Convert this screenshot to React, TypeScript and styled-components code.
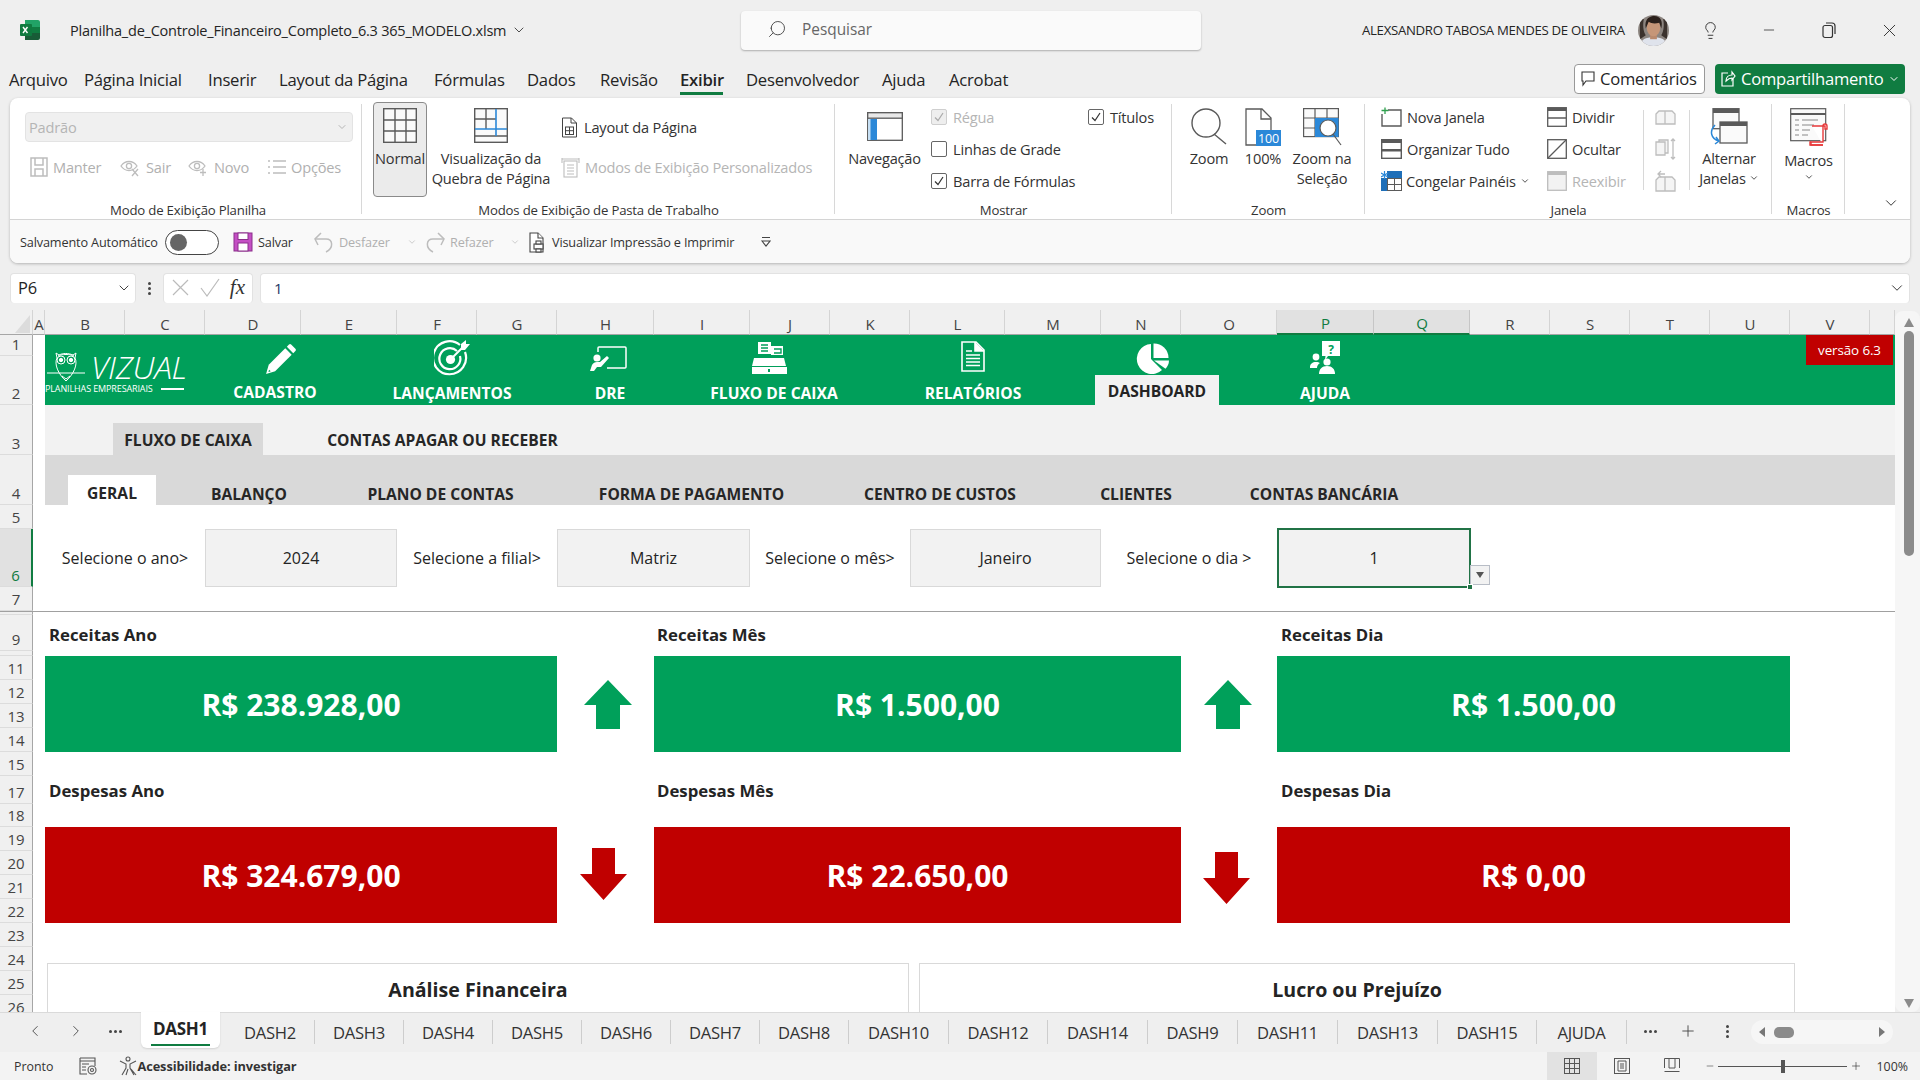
import styled, { createGlobalStyle } from "styled-components"
import { ChevronDown, ChevronLeft, ChevronRight, Lightbulb, Minus, Plus, Search, X } from "lucide-react"

const ui = `"Open Sans", "Noto Sans", sans-serif`

const GlobalStyle = createGlobalStyle`
  html, body { margin: 0; padding: 0; width: 1920px; height: 1080px; overflow: hidden; background: #efefef; }
  * { box-sizing: border-box; }
  body { font-family: ${ui}; color: #242424; }
  svg { display: block; flex: none; }
`

const Window = styled.div`
  width: 1920px;
  height: 1080px;
  display: flex;
  flex-direction: column;
  background: #efefef;
  overflow: hidden;
`

/* title bar */
const TitleBar = styled.div`
  height: 60px;
  flex: none;
  display: flex;
  align-items: center;
  padding-left: 19px;
`
const FileName = styled.div`
  margin-left: 29px;
  width: 454px;
  display: flex;
  align-items: center;
  gap: 5px;
  font-size: 14.5px;
  letter-spacing: -0.22px;
  white-space: nowrap;
`
const SearchBox = styled.div`
  margin-left: 217px;
  width: 460px;
  height: 39px;
  background: #fafafa;
  border-radius: 4px;
  box-shadow: 0 1px 2px rgba(0, 0, 0, 0.28);
  display: flex;
  align-items: center;
  padding-left: 26px;
  padding-bottom: 2px;
  gap: 15px;
  font-size: 15.4px;
  color: #666;
  svg { transform: scaleX(-1); }
`
const UserName = styled.div`
  margin-left: 161px;
  width: 276px;
  font-size: 13.2px;
  letter-spacing: -0.3px;
  white-space: nowrap;
`
const WinButton = styled.div<{ $w: number }>`
  width: ${(p) => p.$w}px;
  display: flex;
  justify-content: center;
  color: #333;
`

/* tab strip */
const TabStrip = styled.div`
  height: 38px;
  flex: none;
  display: flex;
  align-items: flex-start;
  padding-left: 9px;
`
const MenuTab = styled.div<{ $w: number; $active?: boolean }>`
  width: ${(p) => p.$w}px;
  height: 33px;
  padding-top: 9px;
  font-size: 16.7px;
  line-height: 22px;
  letter-spacing: -0.25px;
  white-space: nowrap;
  font-weight: ${(p) => (p.$active ? 600 : 400)};
  position: relative;
  &::after {
    content: "";
    display: ${(p) => (p.$active ? "block" : "none")};
    position: absolute;
    left: 0;
    top: 32px;
    width: 43px;
    height: 3px;
    background: #107c41;
  }
`
const CommentButton = styled.div`
  margin-left: 565px;
  margin-top: 4px;
  width: 131px;
  height: 30px;
  border: 1px solid #999;
  border-radius: 4px;
  background: #fff;
  display: flex;
  align-items: center;
  padding: 0 0 1px 6px;
  gap: 5px;
  font-size: 16.6px;
  letter-spacing: -0.25px;
`
const ShareButton = styled.div`
  margin-left: 10px;
  margin-top: 4px;
  width: 190px;
  height: 30px;
  border-radius: 4px;
  background: #107c41;
  color: #fff;
  display: flex;
  align-items: center;
  padding: 0 0 1px 5px;
  gap: 5px;
  font-size: 16.6px;
  letter-spacing: -0.25px;
  white-space: nowrap;
`

/* ribbon */
const Ribbon = styled.div`
  flex: none;
  margin: 0 10px;
  height: 165px;
  background: #fff;
  border-radius: 8px;
  box-shadow: 0 1px 3px rgba(0, 0, 0, 0.25);
  display: flex;
  flex-direction: column;
  overflow: hidden;
`
const RibbonTop = styled.div`
  height: 122px;
  flex: none;
  padding-top: 4px;
  display: flex;
  border-bottom: 1px solid #d4d4d4;
  font-size: 14.6px;
  letter-spacing: -0.2px;
  color: #333;
`
const Group = styled.div<{ $w: number }>`
  width: ${(p) => p.$w}px;
  height: 116px;
  flex: none;
  position: relative;
  display: flex;
  flex-direction: column;
  &::after {
    content: "";
    position: absolute;
    right: 0;
    top: 2px;
    bottom: 4px;
    width: 1px;
    background: #d8d8d8;
  }
`
const GroupBody = styled.div`
  height: 98px;
  flex: none;
  display: flex;
  align-items: flex-start;
`
const GroupLabel = styled.div<{ $pl?: number }>`
  height: 18px;
  line-height: 18px;
  padding: 1px 0 0 ${(p) => p.$pl ?? 0}px;
  text-align: center;
  font-size: 13.2px;
  letter-spacing: -0.2px;
  color: #333;
  white-space: nowrap;
`
const SheetViewBody = styled.div`
  height: 98px;
  padding: 10px 0 0 15px;
`
const ModeSelect = styled.div`
  width: 328px;
  height: 30px;
  background: #f0f0f0;
  border: 1px solid #e3e3e3;
  border-radius: 4px;
  padding: 0 4px 0 3px;
  display: flex;
  align-items: center;
  justify-content: space-between;
  color: #b5b5b5;
  font-size: 14.6px;
`
const MiniRow = styled.div`
  display: flex;
  margin: 13px 0 0 5px;
  height: 24px;
  align-items: center;
`
const MiniButton = styled.div<{ $w: number }>`
  width: ${(p) => p.$w}px;
  display: flex;
  align-items: center;
  gap: 5px;
  color: #b0b0b0;
  white-space: nowrap;
`
const LargeButton = styled.div<{ $w: number; $ml?: number; $pressed?: boolean }>`
  width: ${(p) => p.$w}px;
  margin-left: ${(p) => p.$ml ?? 0}px;
  height: 95px;
  flex: none;
  padding-top: ${(p) => (p.$pressed ? 5 : 6)}px;
  display: flex;
  flex-direction: column;
  align-items: center;
  text-align: center;
  line-height: 20px;
  white-space: nowrap;
  border-radius: 4px;
  background: ${(p) => (p.$pressed ? "#ebebeb" : "transparent")};
  border: ${(p) => (p.$pressed ? "1px solid #8a8a8a" : "none")};
`
const LargeIcon = styled.div<{ $pt?: number }>`
  height: 40px;
  flex: none;
  padding-top: ${(p) => p.$pt ?? 0}px;
  display: flex;
  align-items: flex-start;
  justify-content: center;
`
const StackColumn = styled.div<{ $w?: number; $ml?: number; $pt?: number; $gap?: number }>`
  width: ${(p) => (p.$w ? `${p.$w}px` : "auto")};
  margin-left: ${(p) => p.$ml ?? 0}px;
  padding-top: ${(p) => p.$pt ?? 0}px;
  display: flex;
  flex-direction: column;
  gap: ${(p) => p.$gap ?? 2}px;
  flex: none;
`
const StackRow = styled.div<{ $h?: number; $gap?: number; $off?: boolean; $pl?: number }>`
  height: ${(p) => p.$h ?? 30}px;
  display: flex;
  align-items: center;
  padding-left: ${(p) => p.$pl ?? 0}px;
  gap: ${(p) => p.$gap ?? 5}px;
  white-space: nowrap;
  color: ${(p) => (p.$off ? "#b5b5b5" : "inherit")};
`
const CheckBox = styled.div<{ $off?: boolean }>`
  width: 16px;
  height: 16px;
  flex: none;
  border: 1px solid ${(p) => (p.$off ? "#cfcfcf" : "#666")};
  background: ${(p) => (p.$off ? "#eee" : "#fff")};
  border-radius: 2px;
  display: flex;
  align-items: center;
  justify-content: center;
`
const VRule = styled.div`
  width: 1px;
  height: 80px;
  margin-top: 8px;
  background: #d8d8d8;
  flex: none;
`
const CollapseButton = styled.div`
  margin-left: 37px;
  align-self: flex-end;
  margin-bottom: 7px;
  color: #333;
`

/* quick access */
const QuickBar = styled.div`
  flex: 1;
  background: #f9f9f9;
  display: flex;
  align-items: center;
  padding-left: 10px;
  padding-top: 1px;
  font-size: 12.7px;
  letter-spacing: -0.15px;
  white-space: nowrap;
`
const QuickItem = styled.div<{ $w: number; $off?: boolean; $ml?: number }>`
  width: ${(p) => p.$w}px;
  margin-left: ${(p) => p.$ml ?? 0}px;
  flex: none;
  display: flex;
  align-items: center;
  gap: 5px;
  color: ${(p) => (p.$off ? "#b0b0b0" : "#333")};
`
const ToggleTrack = styled.div`
  width: 54px;
  height: 25px;
  flex: none;
  border: 1px solid #444;
  border-radius: 13px;
  background: #fff;
  padding: 3px;
  &::before {
    content: "";
    display: block;
    width: 17px;
    height: 17px;
    margin-left: 1px;
    border-radius: 50%;
    background: #666;
  }
`

/* formula bar */
const FormulaRow = styled.div`
  flex: none;
  margin: 10px 10px 0;
  height: 30px;
  display: flex;
  align-items: stretch;
  font-size: 16.4px;
`
const FormulaBox = styled.div<{ $w?: number; $ml?: number }>`
  width: ${(p) => (p.$w ? `${p.$w}px` : "auto")};
  flex: ${(p) => (p.$w ? "none" : "1")};
  margin-left: ${(p) => p.$ml ?? 0}px;
  background: #fff;
  border-radius: 4px;
  border: 1px solid #e2e2e2;
  border-bottom: none;
  display: flex;
  align-items: center;
  justify-content: space-between;
  padding: 0 3px 2px 7px;
`
const FormulaDots = styled.div`
  width: 27px;
  display: flex;
  flex-direction: column;
  align-items: center;
  justify-content: center;
  gap: 2px;
  i { width: 3px; height: 3px; background: #444; border-radius: 50%; }
`
const FxMark = styled.span`
  font-family: "Liberation Serif", serif;
  font-style: italic;
  font-size: 21px;
  color: #333;
  margin-right: 4px;
`
const ValueText = styled.span`
  color: #1f3864;
  margin-left: 6px;
  font-size: 15px;
`

/* sheet */
const SheetArea = styled.div`
  flex: none;
  margin-top: 7px;
  height: 702px;
  display: flex;
`
const columnWidths = "33px 12px 80px 80px 96px 96px 80px 80px 97px 96px 80px 80px 95px 96px 80px 96px 97px 96px 80px 80px 80px 80px 80px 25px"
const rowHeights = "25px 21px 49px 50px 50px 24px 58px 24px 4px 36px 5px 24px 24px 24px 24px 24px 28px 23px 24px 24px 24px 24px 24px 24px 24px 24px"
const SheetGrid = styled.div`
  width: 1895px;
  flex: none;
  overflow: hidden;
  background: #fff;
  display: grid;
  grid-template-columns: ${columnWidths};
  grid-template-rows: ${rowHeights};
`
const Corner = styled.div`
  grid-column: 1;
  grid-row: 1;
  background: #f0f0f0;
  border-right: 1px solid #d4d4d4;
  border-bottom: 1px solid #a6a6a6;
  padding: 5px 0 0 15px;
`
const ColHead = styled.div<{ $col: number; $on?: boolean }>`
  grid-column: ${(p) => p.$col};
  grid-row: 1;
  background: ${(p) => (p.$on ? "#e1e1e1" : "#f0f0f0")};
  border-right: 1px solid ${(p) => (p.$on ? "#c6c6c6" : "#d4d4d4")};
  border-bottom: ${(p) => (p.$on ? "2px solid #107c41" : "1px solid #a6a6a6")};
  color: ${(p) => (p.$on ? "#107c41" : "#444")};
  display: flex;
  justify-content: center;
  align-items: center;
  font-size: 15px;
  padding: 3px 0 0 1px;
`
const RowHead = styled.div<{ $row: number; $on?: boolean }>`
  grid-column: 1;
  grid-row: ${(p) => p.$row};
  background: ${(p) => (p.$on ? "#e1e1e1" : "#f0f0f0")};
  border-right: ${(p) => (p.$on ? "2px solid #107c41" : "1px solid #a6a6a6")};
  border-bottom: 1px solid #dcdcdc;
  color: ${(p) => (p.$on ? "#107c41" : "#444")};
  overflow: hidden;
  display: flex;
  justify-content: center;
  align-items: flex-end;
  font-size: 15px;
  line-height: 22px;
`
const Band = styled.div<{ $row: string; $bg: string }>`
  grid-column: 3 / -1;
  grid-row: ${(p) => p.$row};
  background: ${(p) => p.$bg};
  display: flex;
  align-items: flex-end;
  min-height: 0;
`
const Logo = styled.div`
  width: 150px;
  height: 70px;
  flex: none;
  display: flex;
  flex-direction: column;
  padding-top: 16px;
  color: #fff;
`
const LogoTop = styled.div`
  display: flex;
  align-items: center;
  gap: 6px;
  padding-left: 2px;
  height: 32px;
`
const LogoName = styled.span`
  font-weight: 300;
  font-style: italic;
  font-size: 32px;
  line-height: 32px;
  letter-spacing: -0.3px;
`
const LogoSub = styled.div`
  display: flex;
  align-items: center;
  gap: 8px;
  font-size: 9px;
  line-height: 12px;
  white-space: nowrap;
  letter-spacing: -0.12px;
  &::after {
    content: "";
    width: 23px;
    height: 2px;
    background: #fff;
  }
`
const NavItem = styled.div<{ $w: number; $ml?: number; $lift?: number }>`
  width: ${(p) => p.$w}px;
  margin-left: ${(p) => p.$ml ?? 0}px;
  height: 70px;
  flex: none;
  padding-bottom: ${(p) => p.$lift ?? 1}px;
  display: flex;
  flex-direction: column;
  align-items: center;
  color: #fff;
  font-weight: 700;
  font-size: 15.6px;
  line-height: 22px;
  white-space: nowrap;
`
const NavIcon = styled.div<{ $pt?: number; $dx?: number }>`
  height: 40px;
  flex: 1;
  padding-top: ${(p) => p.$pt ?? 6}px;
  display: flex;
  justify-content: center;
  transform: translateX(${(p) => p.$dx ?? 0}px);
`
const NavLabelActive = styled.div`
  align-self: stretch;
  height: 30px;
  background: #f2f2f2;
  color: #242424;
  text-align: center;
  font-weight: 700;
  font-size: 15.6px;
  line-height: 33px;
`
const VersionTag = styled.div`
  margin-left: auto;
  margin-right: 2px;
  align-self: flex-start;
  width: 87px;
  height: 30px;
  background: #c00000;
  color: #fff;
  font-size: 13.4px;
  display: flex;
  align-items: center;
  justify-content: center;
  letter-spacing: -0.1px;
`
const SubTab = styled.div<{ $w: number; $ml?: number; $h: number; $bg?: string; $pt?: number }>`
  width: ${(p) => p.$w}px;
  margin-left: ${(p) => p.$ml ?? 0}px;
  height: ${(p) => p.$h}px;
  flex: none;
  background: ${(p) => p.$bg ?? "transparent"};
  display: flex;
  align-items: center;
  justify-content: center;
  padding-top: ${(p) => p.$pt ?? 0}px;
  font-weight: 700;
  font-size: 15.6px;
  color: #262626;
  white-space: nowrap;
`
const SelectLabel = styled.div<{ $col: string }>`
  grid-column: ${(p) => p.$col};
  grid-row: 7;
  display: flex;
  align-items: center;
  justify-content: center;
  font-size: 16px;
  white-space: nowrap;
`
const SelectCell = styled.div<{ $col: string; $on?: boolean }>`
  grid-column: ${(p) => p.$col};
  grid-row: 7;
  margin: ${(p) => (p.$on ? "-1px -1px -1px 0" : "0")};
  background: #f2f2f2;
  border: ${(p) => (p.$on ? "2px solid #217346" : "1px solid #d9d9d9")};
  display: flex;
  align-items: center;
  justify-content: center;
  font-size: 16px;
  position: relative;
  z-index: 2;
  &::after {
    content: "";
    display: ${(p) => (p.$on ? "block" : "none")};
    position: absolute;
    right: -4px;
    bottom: -4px;
    background: #217346;
    border: 1px solid #fff;
    box-sizing: content-box;
    width: 4px;
    height: 4px;
  }
`
const DropButton = styled.div`
  position: absolute;
  left: 100%;
  margin-left: 1px;
  top: 35px;
  width: 20px;
  height: 20px;
  background: #f2f2f2;
  border: 1px solid #b8bdc6;
  display: flex;
  align-items: center;
  justify-content: center;
`
const FreezeLine = styled.div`
  grid-column: 1 / -1;
  grid-row: 9;
  border-top: 1px solid #a0a0a0;
  z-index: 3;
`
const CardTitle = styled.div<{ $col: string; $row: string; $pl: number; $pt?: number }>`
  grid-column: ${(p) => p.$col};
  grid-row: ${(p) => p.$row};
  padding-left: ${(p) => p.$pl}px;
  padding-top: ${(p) => p.$pt ?? 8}px;
  font-size: 16.8px;
  font-weight: 700;
  line-height: 24px;
`
const ValueCard = styled.div<{ $col: string; $row: string; $bg: string }>`
  grid-column: ${(p) => p.$col};
  grid-row: ${(p) => p.$row};
  background: ${(p) => p.$bg};
  color: #fff;
  display: flex;
  align-items: center;
  justify-content: center;
  font-size: 30px;
  font-weight: 700;
`
const ArrowCell = styled.div<{ $col: number; $row: string; $dx?: number; $dy?: number }>`
  grid-column: ${(p) => p.$col};
  grid-row: ${(p) => p.$row};
  display: flex;
  align-items: center;
  justify-content: center;
  transform: translate(${(p) => p.$dx ?? 0}px, ${(p) => p.$dy ?? 0}px);
`
const ChartPanel = styled.div<{ $col: string; $ml: number; $mr: number }>`
  grid-column: ${(p) => p.$col};
  grid-row: 24 / 30;
  margin: 16px ${(p) => p.$mr}px 0 ${(p) => p.$ml}px;
  height: 200px;
  border: 1px solid #d9d9d9;
  text-align: center;
  font-size: 19.6px;
  font-weight: 700;
  padding-top: 12px;
  line-height: 28px;
`
const VScroll = styled.div`
  width: 25px;
  flex: none;
  margin-top: 1px;
  background: #f6f6f6;
  border-radius: 8px;
  display: flex;
  flex-direction: column;
  align-items: center;
  padding: 7px 0 4px 2px;
`
const VThumb = styled.div`
  width: 10px;
  height: 225px;
  margin-top: 4px;
  border-radius: 5px;
  background: #8b8b8b;
`
const ScrollArrow = styled.div<{ $down?: boolean }>`
  width: 0;
  height: 0;
  border-left: 5px solid transparent;
  border-right: 5px solid transparent;
  border-bottom: ${(p) => (p.$down ? "none" : "9px solid #8b8b8b")};
  border-top: ${(p) => (p.$down ? "9px solid #8b8b8b" : "none")};
  margin-top: ${(p) => (p.$down ? "auto" : "0")};
`

/* sheet tabs */
const SheetTabs = styled.div`
  flex: none;
  height: 40px;
  border-top: 1px solid #dadada;
  display: flex;
  align-items: flex-start;
  font-size: 16.6px;
  letter-spacing: -0.3px;
  color: #333;
`
const TabNav = styled.div<{ $w: number; $ml?: number }>`
  width: ${(p) => p.$w}px;
  margin-left: ${(p) => p.$ml ?? 0}px;
  height: 39px;
  flex: none;
  display: flex;
  align-items: center;
  justify-content: center;
  color: #444;
  padding-bottom: 3px;
`
const DotRow = styled.div<{ $column?: boolean }>`
  display: flex;
  flex-direction: ${(p) => (p.$column ? "column" : "row")};
  gap: 2px;
  i { width: 3px; height: 3px; background: #444; border-radius: 50%; }
`
const ActiveSheet = styled.div`
  margin-left: 13px;
  margin-top: -1px;
  width: 79px;
  height: 36px;
  flex: none;
  background: #fff;
  border-radius: 0 0 6px 6px;
  box-shadow: 0 1px 2px rgba(0, 0, 0, 0.12);
  padding: 5px 0 0;
  text-align: center;
  font-weight: 700;
  font-size: 17px;
  color: #242424;
  line-height: 23px;
  position: relative;
  &::after {
    content: "";
    position: absolute;
    left: 10px;
    right: 10px;
    bottom: 2px;
    height: 2px;
    background: #107c41;
  }
`
const SheetTab = styled.div<{ $w: number; $ml?: number }>`
  width: ${(p) => p.$w}px;
  margin-left: ${(p) => p.$ml ?? 0}px;
  margin-top: 7px;
  height: 24px;
  flex: none;
  text-align: center;
  line-height: 24px;
  border-right: 1px solid #cdcdcd;
  padding-top: 1px;
`
const HScroll = styled.div`
  margin-top: 7px;
  width: 142px;
  height: 24px;
  border-radius: 12px;
  background: #f6f6f6;
  display: flex;
  align-items: center;
  padding: 0 8px 0 8px;
  gap: 9px;
`
const HThumb = styled.div`
  width: 20px;
  height: 11px;
  border-radius: 5px;
  background: #8b8b8b;
`
const SideArrow = styled.div<{ $right?: boolean }>`
  width: 0;
  height: 0;
  border-top: 5px solid transparent;
  border-bottom: 5px solid transparent;
  border-left: ${(p) => (p.$right ? "6px solid #777" : "none")};
  border-right: ${(p) => (p.$right ? "none" : "6px solid #777")};
  margin-left: ${(p) => (p.$right ? "auto" : "0")};
`

/* status bar */
const StatusBar = styled.div`
  flex: 1;
  background: #f3f3f3;
  display: flex;
  align-items: center;
  padding: 0 12px 0 14px;
  font-size: 12.4px;
  color: #333;
  white-space: nowrap;
`
const StatusGap = styled.span<{ $w: number }>`
  width: ${(p) => p.$w}px;
  flex: none;
`
const StatusStrong = styled.span`
  font-weight: 700;
  font-size: 12.8px;
  letter-spacing: -0.1px;
`
const ViewButton = styled.div<{ $on?: boolean; $first?: boolean; $w: number }>`
  width: ${(p) => p.$w}px;
  margin-left: ${(p) => (p.$first ? "auto" : "0")};
  height: 28px;
  display: flex;
  align-items: center;
  justify-content: center;
  background: ${(p) => (p.$on ? "#e2e2e2" : "transparent")};
`
const ZoomTrack = styled.div`
  width: 129px;
  height: 1px;
  background: #555;
  margin: 0 3px;
  position: relative;
  &::after {
    content: "";
    position: absolute;
    left: 63px;
    top: -6px;
    width: 4px;
    height: 13px;
    background: #555;
  }
`
const ZoomValue = styled.span`
  margin-left: 15px;
`

const g = "#5a5a5a"
const off = "#bdbdbd"
const blue = "#2b88d8"

const ExcelIcon = () => (
  <svg width="22" height="22" viewBox="0 0 22 22">
    <path d="M6 1h13a2 2 0 0 1 2 2v5H6z" fill="#21a366" />
    <rect x="6" y="8" width="15" height="6" fill="#107c41" />
    <path d="M6 14h15v5a2 2 0 0 1-2 2H6z" fill="#185c37" />
    <rect x="1" y="5" width="12" height="12" rx="1" fill="#0f7a3f" />
    <path d="M4 8l4.5 6M8.5 8L4 14" stroke="#fff" strokeWidth="1.4" />
  </svg>
)
const Avatar = () => (
  <svg width="31" height="31" viewBox="0 0 32 32">
    <clipPath id="av"><circle cx="16" cy="16" r="16" /></clipPath>
    <g clipPath="url(#av)">
      <rect width="32" height="32" fill="#8c8580" />
      <path d="M2 32c1-7 6-9 14-9s13 2 14 9z" fill="#dfe3ec" />
      <rect x="12.5" y="18" width="7" height="7" fill="#b98a6e" />
      <ellipse cx="16" cy="13" rx="7" ry="9" fill="#c69678" />
      <path d="M8 14C6 3 13 1 17 1c6 0 9 5 7 13l-2-6c-4 1-8 1-11-1z" fill="#2c211c" />
      <path d="M6 4C5 9 5 16 8 21l-6 4V2zM26 4c1 5 1 12-2 17l6 4V2z" fill="#3b322d" />
    </g>
  </svg>
)
const RestoreIcon = () => (
  <svg width="14" height="18" viewBox="0 0 14 18" fill="none" stroke="#333" strokeWidth="1.2">
    <rect x="1" y="4.5" width="9.5" height="12" rx="2" />
    <path d="M4 2h6a3 3 0 0 1 3 3v8" />
  </svg>
)
const CommentIcon = ({ c = "#333" }: { c?: string }) => (
  <svg width="14" height="18" viewBox="0 0 14 18" fill="none" stroke={c} strokeWidth="1.1">
    <path d="M1 2h12v9H5l-3 4v-4H1z" />
  </svg>
)
const ShareIcon = () => (
  <svg width="16" height="18" viewBox="0 0 16 18" fill="none" stroke="#fff" strokeWidth="1.2">
    <path d="M8 3H2v13h11V9" />
    <path d="M6 11c0-4 3-6 6-6V2l3 4-3 4V8c-2 0-4 1-6 3z" />
  </svg>
)
const SheetGridIcon = () => (
  <svg width="34" height="35" viewBox="0 0 34 35" fill="#fafafa" stroke={g} strokeWidth="1.4">
    <rect x=".7" y=".7" width="32.6" height="33.6" />
    <path d="M12 1v33M23 1v33M1 12h32M1 23h32" fill="none" />
  </svg>
)
const BreakIcon = () => (
  <svg width="34" height="35" viewBox="0 0 34 35" fill="#fafafa" stroke={g} strokeWidth="1.4">
    <rect x=".7" y=".7" width="32.6" height="33.6" />
    <path d="M12 1v20M1 11h21M1 28h32" fill="none" />
    <path d="M22 1v27M1 21h32" fill="none" stroke={blue} strokeWidth="1.6" />
  </svg>
)
const PageLayoutIcon = () => (
  <svg width="17" height="21" viewBox="0 0 17 21" fill="#fff" stroke="#444" strokeWidth="1">
    <path d="M1.5 1h9l5 5v14h-14z" />
    <path d="M10 1v5h5.5" fill="none" />
    <rect x="4.5" y="10" width="8" height="7.5" />
    <path d="M8.5 10v7.5M4.5 13.7h8" />
  </svg>
)
const CustomViewIcon = () => (
  <svg width="19" height="21" viewBox="0 0 19 21" fill="none" stroke={off} strokeWidth="1.1">
    <rect x="3" y="4" width="13" height="16" />
    <path d="M1 1v5M18 1v5M1 2h17M6 8h7M6 11h7M6 14h7M6 17h7" />
  </svg>
)
const KeepIcon = () => (
  <svg width="18" height="20" viewBox="0 0 18 20" fill="none" stroke={off} strokeWidth="1.5">
    <path d="M1 1h16v18H1zM5 1v7h8V1M5 19v-7h8v7" />
  </svg>
)
const EyeIcon = ({ mark }: { mark: "x" | "+" }) => (
  <svg width="21" height="19" viewBox="0 0 21 19" fill="none" stroke={off} strokeWidth="1.3">
    <path d="M1 8c4-6 12-6 16 0-4 6-12 6-16 0z" />
    <circle cx="9" cy="8" r="2.6" />
    {mark === "x" ? <path d="M12 11l6 7M18 11l-6 7" /> : <path d="M15 11v7M12 14.5h6" />}
  </svg>
)
const ListIcon = () => (
  <svg width="19" height="16" viewBox="0 0 19 16" fill="none" stroke={off} strokeWidth="1.4">
    <path d="M6 2h13M6 8h13M6 14h13M1 2h2M1 8h2M1 14h2" />
  </svg>
)
const NavPaneIcon = () => (
  <svg width="36" height="29" viewBox="0 0 36 29" fill="#fff" stroke={g} strokeWidth="1.3">
    <rect x=".7" y=".7" width="34.6" height="27.6" />
    <rect x=".7" y=".7" width="34.6" height="5.5" fill="#e8e8e8" />
    <rect x="1" y="7" width="9" height="21" fill={blue} stroke="none" />
    <rect x="1" y="7" width="2.5" height="21" fill="#c7e0f4" stroke="none" />
  </svg>
)
const Check = ({ c = "#333" }: { c?: string }) => (
  <svg width="12" height="12" viewBox="0 0 12 12" fill="none" stroke={c} strokeWidth="1.2">
    <path d="M2 6.5l3 3 5-7.5" />
  </svg>
)
const ZoomIcon = () => (
  <svg width="37" height="38" viewBox="0 0 37 38" fill="#fff" stroke={g} strokeWidth="1.4">
    <circle cx="15" cy="15" r="14" />
    <path d="M24 27l12 10" transform="translate(-1 -1)" />
  </svg>
)
const FullZoomIcon = () => (
  <svg width="36" height="38" viewBox="0 0 36 38">
    <path d="M1 1h16l9 9v27H1z" fill="#fff" stroke={g} strokeWidth="1.3" />
    <path d="M16 1v10h10" fill="none" stroke={g} strokeWidth="1.3" />
    <rect x="11" y="22" width="25" height="16" fill="#2b88d8" />
    <text x="23.5" y="35" fontSize="12.5" fill="#fff" textAnchor="middle" fontFamily="Open Sans, sans-serif">100</text>
  </svg>
)
const ZoomSelIcon = () => (
  <svg width="39" height="38" viewBox="0 0 39 38" fill="none" stroke={g} strokeWidth="1.2">
    <rect x=".6" y=".6" width="34.8" height="28" fill="#fafafa" />
    <path d="M12 1v28M24 1v28M1 10h34M1 20h34" />
    <rect x="12" y="10" width="23.5" height="19" fill="#2b88d8" stroke="none" />
    <circle cx="25" cy="20" r="8" fill="#fff" />
    <path d="M30 26l8 11" />
  </svg>
)
const NewWindowIcon = () => (
  <svg width="21" height="20" viewBox="0 0 21 20" fill="#fff" stroke={g} strokeWidth="1.4">
    <path d="M7 3h13v16H1V7" />
    <path d="M4 0.5v6.5M0.5 3.5h7" stroke="#2fa04e" strokeWidth="1.3" fill="none" />
  </svg>
)
const ArrangeIcon = () => (
  <svg width="21" height="20" viewBox="0 0 21 20" fill="#fff" stroke={g} strokeWidth="1.4">
    <rect x=".7" y=".7" width="19.6" height="18.6" />
    <rect x="1" y="1" width="19" height="3" fill={g} stroke="none" />
    <rect x="1" y="10" width="19" height="2.5" fill={g} stroke="none" />
  </svg>
)
const FreezeIcon = () => (
  <svg width="21" height="20" viewBox="0 0 21 20" fill="none">
    <rect x="6" y="0" width="15" height="7" fill="#1f6fb8" />
    <rect x="0" y="7" width="6" height="13" fill="#1f6fb8" />
    <rect x="6.5" y="7.5" width="14" height="12" fill="#fff" stroke={g} />
    <path d="M13.5 7v13M6 13.5h15" stroke={g} />
    <path d="M3.5 0v8M0 2l7 4M7 2L0 6" stroke="#2b88d8" strokeWidth="1.2" />
  </svg>
)
const SplitIcon = () => (
  <svg width="20" height="20" viewBox="0 0 20 20" fill="#fff" stroke={g} strokeWidth="1.3">
    <rect x=".7" y=".7" width="18.6" height="18.6" />
    <rect x="1" y="1" width="18" height="3" fill={g} stroke="none" />
    <path d="M1 11h18" />
  </svg>
)
const HideIcon = () => (
  <svg width="20" height="20" viewBox="0 0 20 20" fill="#fff" stroke={g} strokeWidth="1.3">
    <rect x=".7" y=".7" width="18.6" height="18.6" />
    <path d="M1 19L19 1" />
  </svg>
)
const UnhideIcon = () => (
  <svg width="20" height="20" viewBox="0 0 20 20" fill="#f2f2f2" stroke={off} strokeWidth="1.3">
    <rect x=".7" y=".7" width="18.6" height="18.6" />
    <rect x="1" y="1" width="18" height="3" fill={off} stroke="none" />
  </svg>
)
const BookIcon = () => (
  <svg width="21" height="15" viewBox="0 0 21 15" fill="#f5f5f5" stroke={off} strokeWidth="1.3">
    <path d="M1 4l3-3h6v13H1zM10 1h7l3 3v10H10z" />
  </svg>
)
const SyncScrollIcon = () => (
  <svg width="21" height="22" viewBox="0 0 21 22" fill="#f5f5f5" stroke={off} strokeWidth="1.3">
    <path d="M1 4h9v13H1zM4 4V2h9v13h-3" />
    <path d="M18 1v20M16 3l2-2 2 2M16 19l2 2 2-2" fill="none" />
  </svg>
)
const ResetIcon = () => (
  <svg width="21" height="22" viewBox="0 0 21 22" fill="#f5f5f5" stroke={off} strokeWidth="1.3">
    <path d="M1 10l3-3h6v14H1zM10 7h7l3 3v11H10z" />
    <path d="M10 4H4M6 1L3 4l3 3" fill="none" />
  </svg>
)
const SwitchIcon = () => (
  <svg width="38" height="37" viewBox="0 0 38 37" fill="#fafafa" stroke={g} strokeWidth="1.3">
    <rect x="3" y=".7" width="26" height="20" />
    <rect x="3" y="1" width="26" height="4" fill={g} stroke="none" />
    <rect x="10" y="14" width="27" height="21" />
    <rect x="10" y="14" width="27" height="4" fill={g} stroke="none" />
    <path d="M5 17c-6 6-4 14 4 16M6 29l3 4-4 3" fill="none" stroke={blue} strokeWidth="1.5" />
  </svg>
)
const MacroIcon = () => (
  <svg width="38" height="38" viewBox="0 0 38 38" fill="none" stroke={g} strokeWidth="1.2">
    <rect x=".7" y=".7" width="35" height="32" fill="#fafafa" />
    <path d="M1 6h35" strokeWidth="1.8" />
    <path d="M5 12h4M12 12h16M5 17h4M12 17h12M5 22h4M12 22h8M5 27h4M12 27h6" strokeWidth="1.2" stroke="#888" />
    <path d="M22 18h13v3h2v-3a2 2 0 0 0-4 0v16H21v3h12" stroke="#e8393a" strokeWidth="1.4" fill="#fff" />
    <path d="M21 34h-1v3h13" stroke="#e8393a" strokeWidth="1.4" />
  </svg>
)
const SaveIcon = () => (
  <svg width="20" height="20" viewBox="0 0 20 20">
    <rect x="1" y="1" width="18" height="18" fill="#c44fc4" stroke="#8b2f8b" />
    <rect x="5" y="1" width="10" height="6.5" fill="#fff" stroke="#8b2f8b" />
    <rect x="5" y="11" width="10" height="8" fill="#fff" stroke="#8b2f8b" />
  </svg>
)
const UndoIcon = ({ flip }: { flip?: boolean }) => (
  <svg width="20" height="21" viewBox="0 0 20 21" fill="none" stroke={off} strokeWidth="1.5" style={flip ? { transform: "scaleX(-1)" } : undefined}>
    <path d="M1 7h11c7 0 8 9 0 13" />
    <path d="M7 1L1 7l3 6" />
  </svg>
)
const PrintIcon = () => (
  <svg width="18" height="21" viewBox="0 0 18 21" fill="#fff" stroke="#444" strokeWidth="1.1">
    <path d="M1 1h8l5 5v14H1z" />
    <path d="M9 1v5h5" />
    <rect x="5" y="12" width="9" height="5" />
    <rect x="7" y="9" width="5" height="3" />
    <rect x="7" y="17" width="5" height="3" />
  </svg>
)
const CustomizeIcon = () => (
  <svg width="10" height="12" viewBox="0 0 10 12" fill="none" stroke="#444" strokeWidth="1.1">
    <path d="M1 1.5h8M1 5l4 5 4-5z" />
  </svg>
)
const CellXIcon = () => (
  <svg width="19" height="19" viewBox="0 0 19 19" fill="none" stroke="#bbb" strokeWidth="1.2">
    <path d="M2 2l15 15M17 2L2 17" />
  </svg>
)
const CellCheckIcon = () => (
  <svg width="20" height="19" viewBox="0 0 20 19" fill="none" stroke="#bbb" strokeWidth="1.2">
    <path d="M1 10l6 8L19 1" />
  </svg>
)
const OwlLogo = () => (
  <svg width="38" height="32" viewBox="0 0 38 32" fill="none" stroke="#fff" strokeWidth="1">
    <path d="M9 2l3 2c4-2 9-2 14 0l3-2-1 5c3 6-1 16-9 23C11 23 7 13 10 7z" />
    <circle cx="14" cy="9" r="4" />
    <circle cx="14" cy="9" r="1.7" fill="#fff" />
    <circle cx="24" cy="9" r="4" />
    <circle cx="24" cy="9" r="1.7" fill="#fff" />
    <path d="M11 5c3-2 13-2 16 0M0 22h38M15 25l4 3 4-3" />
  </svg>
)
const PencilIcon = () => (
  <svg width="32" height="30" viewBox="0 0 30 28" fill="#fff">
    <path d="M1 28l2.5-8.5L19 4l6 6L9.5 25.5z" />
    <path d="M20.5 2.5l2-2a1.5 1.5 0 0 1 2 0l4 4a1.5 1.5 0 0 1 0 2l-2 2z" />
    <path d="M3.8 24l1.6 1.6-2.2.7z" fill="#009f5a" />
  </svg>
)
const TargetIcon = () => (
  <svg width="36" height="36" viewBox="0 0 36 36" fill="none" stroke="#fff" strokeWidth="2.2">
    <path d="M26 5a16.5 16.5 0 1 0 5 7" />
    <path d="M23 11a10.5 10.5 0 1 0 3 5" />
    <circle cx="16.5" cy="19.5" r="4.6" fill="#fff" stroke="none" />
    <path d="M17 19L29 7" strokeWidth="2" />
    <path d="M27 4l5-4 0 4 4 0-5 6h-4z" fill="#fff" stroke="none" />
  </svg>
)
const BoardIcon = () => (
  <svg width="38" height="26" viewBox="0 0 38 26" fill="none">
    <path d="M9 6V2a1 1 0 0 1 1-1h26a1 1 0 0 1 1 1v19a1 1 0 0 1-1 1H18" stroke="#fff" strokeWidth="1.5" />
    <circle cx="8" cy="12" r="3.6" fill="#fff" />
    <path d="M1 25l2-6c1-2 3-3 5-3h3l7-6 2 2-8 9H8l-3 4z" fill="#fff" />
  </svg>
)
const RegisterIcon = () => (
  <svg width="36" height="33" viewBox="0 0 36 33" fill="#fff">
    <path d="M7 0h13v12H7zM3 16h30l2 8H1z" />
    <path d="M20 4h12v9H20z" />
    <rect x="1" y="25" width="35" height="7" />
    <path d="M10 3h7M10 6h7M10 9h7M23 7h7v4h-7" stroke="#009f5a" strokeWidth="1.4" fill="none" />
    <path d="M18 27v3" stroke="#009f5a" strokeWidth="2" />
  </svg>
)
const ReportIcon = () => (
  <svg width="24" height="31" viewBox="0 0 24 31" fill="none" stroke="#fff" strokeWidth="1.6">
    <path d="M1 1h14l8 8v21H1z" />
    <path d="M14 1v9h9" fill="#fff" />
    <path d="M5 10h6M5 14h14M5 17.5h14M5 21h14M5 24.5h14" />
  </svg>
)
const PieIcon = () => (
  <svg width="33" height="31" viewBox="0 0 33 31" fill="#fff">
    <path d="M15 1a15 15 0 1 0 11 26l-11-11z" />
    <path d="M17.5.5a14.5 14.5 0 0 1 15 14.500h-15z" />
    <path d="M18 17.500h15c0 3.500-1.500 6-3.500 8.300z" />
  </svg>
)
const HelpIcon = () => (
  <svg width="30" height="33" viewBox="0 0 30 33" fill="#fff">
    <path d="M12 0h18v15H18l-3 4 .5-4H12z" />
    <text x="21" y="12.500" fontSize="12" fontWeight="700" fill="#009f5a" textAnchor="middle" fontFamily="Open Sans, sans-serif">?</text>
    <circle cx="6" cy="16" r="3.400" />
    <path d="M0 26c0-3 2.500-5 6-5 2 0 3 .5 4 1-2 1-3 3-3 5H0z" />
    <circle cx="17" cy="21" r="3.600" />
    <path d="M9 33c0-5 3-8 8-8s8 3 8 8z" />
  </svg>
)
const ArrowUp = () => (
  <svg width="48" height="49" viewBox="0 0 48 49" fill="#00a05a">
    <path d="M24 0l24 25H36v24H12V25H0z" />
  </svg>
)
const ArrowDown = () => (
  <svg width="47" height="52" viewBox="0 0 47 52" fill="#c00000">
    <path d="M23.500 52L0 26h12V0h23v26h12z" />
  </svg>
)
const StatusSheetIcon = () => (
  <svg width="18" height="18" viewBox="0 0 18 18" fill="none" stroke="#555" strokeWidth="1.1">
    <path d="M1 1h15v8M1 1v16h7M1 4h15" />
    <path d="M3 7h7M3 10h4M3 13h4" />
    <circle cx="13" cy="13" r="4" />
    <circle cx="13" cy="13" r="1.500" />
  </svg>
)
const AccessIcon = () => (
  <svg width="18" height="20" viewBox="0 0 18 20" fill="none" stroke="#555" strokeWidth="1.1">
    <circle cx="9" cy="3" r="2" />
    <path d="M1 5l6 3v4l-4 7M17 5l-6 3v4l4 7M9 13l-2 6M12 13l5 6" />
  </svg>
)
const StatusGridIcon = () => (
  <svg width="16" height="16" viewBox="0 0 16 16" fill="none" stroke="#555" strokeWidth="1">
    <rect x=".5" y=".5" width="15" height="15" />
    <path d="M5.500 1v14M10.500 1v14M1 5.500h14M1 10.500h14" />
  </svg>
)
const StatusPageIcon = () => (
  <svg width="16" height="16" viewBox="0 0 16 16" fill="none" stroke="#555" strokeWidth="1">
    <rect x=".5" y=".5" width="15" height="15" />
    <path d="M4 3h8v10H4zM6 6h4M6 8h4M6 10h4" />
  </svg>
)
const StatusBreakIcon = () => (
  <svg width="16" height="16" viewBox="0 0 16 16" fill="none" stroke="#555" strokeWidth="1">
    <path d="M.5 10V.5h15V10M.5 13.500h15M5 1v9h6V1" />
  </svg>
)

const menus: Array<[string, number]> = [
  ["Arquivo", 75], ["Página Inicial", 124], ["Inserir", 71], ["Layout da Página", 155], ["Fórmulas", 93], ["Dados", 73], ["Revisão", 80],
]
const columns = "A B C D E F G H I J K L M N O P Q R S T U V".split(" ")
const rowLabels: Array<[string, number]> = [
  ["1", 2], ["2", 3], ["3", 4], ["4", 5], ["5", 6], ["6", 7], ["7", 8], ["8", 9], ["9", 10], ["10", 11], ["11", 12], ["12", 13], ["13", 14],
  ["14", 15], ["15", 16], ["17", 17], ["18", 18], ["19", 19], ["20", 20], ["21", 21], ["22", 22], ["23", 23], ["24", 24], ["25", 25], ["26", 26],
]
const sheetTabs: Array<[string, number]> = [
  ["DASH2", 89], ["DASH3", 89], ["DASH4", 89], ["DASH5", 89], ["DASH6", 89], ["DASH7", 89], ["DASH8", 89], ["DASH10", 100], ["DASH12", 99],
  ["DASH14", 100], ["DASH9", 90], ["DASH11", 100], ["DASH13", 100], ["DASH15", 99], ["AJUDA", 90],
]
const subTabs: Array<[string, number]> = [
  ["BALANÇO", 186], ["PLANO DE CONTAS", 197], ["FORMA DE PAGAMENTO", 305], ["CENTRO DE CUSTOS", 192], ["CLIENTES", 200], ["CONTAS BANCÁRIA", 176],
]

const Dots = ({ column }: { column?: boolean }) => (
  <DotRow $column={column}><i /><i /><i /></DotRow>
)

export default function App() {
  return (
    <Window>
      <GlobalStyle />
      <TitleBar>
        <ExcelIcon />
        <FileName>
          Planilha_de_Controle_Financeiro_Completo_6.3 365_MODELO.xlsm
          <ChevronDown size={16} strokeWidth={1.2} />
        </FileName>
        <SearchBox>
          <Search size={20} strokeWidth={1.1} color="#444" />
          Pesquisar
        </SearchBox>
        <UserName>ALEXSANDRO TABOSA MENDES DE OLIVEIRA</UserName>
        <Avatar />
        <WinButton $w={83}><Lightbulb size={19} strokeWidth={1.2} /></WinButton>
        <WinButton $w={34}><Minus size={16} strokeWidth={1.2} /></WinButton>
        <WinButton $w={86}><RestoreIcon /></WinButton>
        <WinButton $w={34}><X size={21} strokeWidth={1.1} /></WinButton>
      </TitleBar>

      <TabStrip>
        {menus.map(([name, w]) => (
          <MenuTab key={name} $w={w}>{name}</MenuTab>
        ))}
        <MenuTab $w={66} $active>Exibir</MenuTab>
        <MenuTab $w={136}>Desenvolvedor</MenuTab>
        <MenuTab $w={67}>Ajuda</MenuTab>
        <MenuTab $w={60}>Acrobat</MenuTab>
        <CommentButton><CommentIcon />Comentários</CommentButton>
        <ShareButton>
          <ShareIcon />
          Compartilhamento
          <ChevronDown size={12} strokeWidth={2} />
        </ShareButton>
      </TabStrip>

      <Ribbon>
        <RibbonTop>
          <Group $w={352}>
            <SheetViewBody>
              <ModeSelect>Padrão<ChevronDown size={12} /></ModeSelect>
              <MiniRow>
                <MiniButton $w={90}><KeepIcon />Manter</MiniButton>
                <MiniButton $w={68}><EyeIcon mark="x" />Sair</MiniButton>
                <MiniButton $w={79}><EyeIcon mark="+" />Novo</MiniButton>
                <MiniButton $w={78}><ListIcon />Opções</MiniButton>
              </MiniRow>
            </SheetViewBody>
            <GroupLabel $pl={4}>Modo de Exibição Planilha</GroupLabel>
          </Group>

          <Group $w={473}>
            <GroupBody>
              <LargeButton $w={54} $ml={11} $pressed>
                <LargeIcon><SheetGridIcon /></LargeIcon>
                Normal
              </LargeButton>
              <LargeButton $w={118} $ml={5}>
                <LargeIcon><BreakIcon /></LargeIcon>
                Visualização da<br />Quebra de Página
              </LargeButton>
              <StackColumn $ml={11} $pt={10} $gap={10}>
                <StackRow $gap={6}><PageLayoutIcon />Layout da Página</StackRow>
                <StackRow $gap={5} $off><CustomViewIcon />Modos de Exibição Personalizados</StackRow>
              </StackColumn>
            </GroupBody>
            <GroupLabel>Modos de Exibição de Pasta de Trabalho</GroupLabel>
          </Group>

          <Group $w={337}>
            <GroupBody>
              <LargeButton $w={75} $ml={12}>
                <LargeIcon $pt={4}><NavPaneIcon /></LargeIcon>
                Navegação
              </LargeButton>
              <StackColumn $w={157} $ml={9}>
                <StackRow $gap={6} $off><CheckBox $off><Check c="#aaa" /></CheckBox>Régua</StackRow>
                <StackRow $gap={6}><CheckBox />Linhas de Grade</StackRow>
                <StackRow $gap={6}><CheckBox><Check /></CheckBox>Barra de Fórmulas</StackRow>
              </StackColumn>
              <StackColumn>
                <StackRow $gap={6}><CheckBox><Check /></CheckBox>Títulos</StackRow>
              </StackColumn>
            </GroupBody>
            <GroupLabel>Mostrar</GroupLabel>
          </Group>

          <Group $w={193}>
            <GroupBody>
              <LargeButton $w={50} $ml={12}>
                <LargeIcon><ZoomIcon /></LargeIcon>
                Zoom
              </LargeButton>
              <LargeButton $w={46} $ml={6}>
                <LargeIcon><FullZoomIcon /></LargeIcon>
                100%
              </LargeButton>
              <LargeButton $w={64} $ml={4}>
                <LargeIcon><ZoomSelIcon /></LargeIcon>
                Zoom na<br />Seleção
              </LargeButton>
            </GroupBody>
            <GroupLabel>Zoom</GroupLabel>
          </Group>

          <Group $w={407}>
            <GroupBody>
              <StackColumn $w={166} $ml={16}>
                <StackRow><NewWindowIcon />Nova Janela</StackRow>
                <StackRow><ArrangeIcon />Organizar Tudo</StackRow>
                <StackRow $gap={4}><FreezeIcon />Congelar Painéis<ChevronDown size={10} strokeWidth={2} /></StackRow>
              </StackColumn>
              <StackColumn $w={96}>
                <StackRow><SplitIcon />Dividir</StackRow>
                <StackRow><HideIcon />Ocultar</StackRow>
                <StackRow $off><UnhideIcon />Reexibir</StackRow>
              </StackColumn>
              <VRule />
              <StackColumn $w={45}>
                <StackRow $pl={11}><BookIcon /></StackRow>
                <StackRow $pl={11}><SyncScrollIcon /></StackRow>
                <StackRow $pl={11}><ResetIcon /></StackRow>
              </StackColumn>
              <VRule />
              <LargeButton $w={72} $ml={3}>
                <LargeIcon><SwitchIcon /></LargeIcon>
                Alternar<br />
                <StackRow $h={20} $gap={3}>Janelas<ChevronDown size={10} strokeWidth={2} /></StackRow>
              </LargeButton>
            </GroupBody>
            <GroupLabel>Janela</GroupLabel>
          </Group>

          <Group $w={73}>
            <GroupBody>
              <LargeButton $w={73}>
                <LargeIcon><MacroIcon /></LargeIcon>
                <StackRow $h={24}>Macros</StackRow>
                <ChevronDown size={10} strokeWidth={2} />
              </LargeButton>
            </GroupBody>
            <GroupLabel>Macros</GroupLabel>
          </Group>

          <CollapseButton><ChevronDown size={18} strokeWidth={1.3} /></CollapseButton>
        </RibbonTop>

        <QuickBar>
          <QuickItem $w={145}>Salvamento Automático</QuickItem>
          <ToggleTrack />
          <QuickItem $w={81} $ml={14}><SaveIcon />Salvar</QuickItem>
          <QuickItem $w={111} $off>
            <UndoIcon />Desfazer
            <ChevronDown size={10} strokeWidth={1.5} style={{ marginLeft: 12 }} />
          </QuickItem>
          <QuickItem $w={104} $off>
            <UndoIcon flip />Refazer
            <ChevronDown size={10} strokeWidth={1.5} style={{ marginLeft: 12 }} />
          </QuickItem>
          <QuickItem $w={232}><PrintIcon />Visualizar Impressão e Imprimir</QuickItem>
          <CustomizeIcon />
        </QuickBar>
      </Ribbon>

      <FormulaRow>
        <FormulaBox $w={126}>P6<ChevronDown size={16} strokeWidth={1.3} /></FormulaBox>
        <FormulaDots><i /><i /><i /></FormulaDots>
        <FormulaBox $w={90}><CellXIcon /><CellCheckIcon /><FxMark>fx</FxMark></FormulaBox>
        <FormulaBox $ml={7}>
          <ValueText>1</ValueText>
          <ChevronDown size={18} strokeWidth={1.2} />
        </FormulaBox>
      </FormulaRow>

      <SheetArea>
        <SheetGrid>
          <Corner>
            <svg width="15" height="18" viewBox="0 0 15 18"><path d="M15 0v18H0z" fill="#dcdcdc" /></svg>
          </Corner>
          {columns.map((c, i) => (
            <ColHead key={c} $col={i + 2} $on={c === "P" || c === "Q"}>{c}</ColHead>
          ))}
          <ColHead $col={24} />
          {rowLabels.map(([label, row]) => (
            <RowHead key={label} $row={row} $on={label === "6"}>{label}</RowHead>
          ))}

          <Band $row="2 / 4" $bg="#009f5a">
            <Logo>
              <LogoTop><OwlLogo /><LogoName>VIZUAL</LogoName></LogoTop>
              <LogoSub>PLANILHAS EMPRESARIAIS</LogoSub>
            </Logo>
            <NavItem $w={160} $lift={2}><NavIcon $pt={9} $dx={6}><PencilIcon /></NavIcon>CADASTRO</NavItem>
            <NavItem $w={194}><NavIcon $pt={5}><TargetIcon /></NavIcon>LANÇAMENTOS</NavItem>
            <NavItem $w={122}><NavIcon $pt={11} $dx={-2}><BoardIcon /></NavIcon>DRE</NavItem>
            <NavItem $w={206}><NavIcon $pt={7} $dx={-5}><RegisterIcon /></NavIcon>FLUXO DE CAIXA</NavItem>
            <NavItem $w={192}><NavIcon><ReportIcon /></NavIcon>RELATÓRIOS</NavItem>
            <NavItem $w={124} $ml={26} $lift={0}>
              <NavIcon $pt={8} $dx={-5}><PieIcon /></NavIcon>
              <NavLabelActive>DASHBOARD</NavLabelActive>
            </NavItem>
            <NavItem $w={160} $ml={26}><NavIcon><HelpIcon /></NavIcon>AJUDA</NavItem>
            <VersionTag>versão 6.3</VersionTag>
          </Band>

          <Band $row="4" $bg="#f2f2f2">
            <SubTab $w={150} $ml={68} $h={32} $bg="#d9d9d9" $pt={1}>FLUXO DE CAIXA</SubTab>
            <SubTab $w={233} $ml={63} $h={32} $pt={1}>CONTAS APAGAR OU RECEBER</SubTab>
          </Band>
          <Band $row="5" $bg="#d9d9d9">
            <SubTab $w={88} $ml={23} $h={30} $bg="#fff" $pt={6}>GERAL</SubTab>
            {subTabs.map(([name, w]) => (
              <SubTab key={name} $w={w} $h={30} $pt={7}>{name}</SubTab>
            ))}
          </Band>

          <SelectLabel $col="3 / 5">Selecione o ano&gt;</SelectLabel>
          <SelectCell $col="5 / 7">2024</SelectCell>
          <SelectLabel $col="7 / 9">Selecione a filial&gt;</SelectLabel>
          <SelectCell $col="9 / 11">Matriz</SelectCell>
          <SelectLabel $col="11 / 13">Selecione o mês&gt;</SelectLabel>
          <SelectCell $col="13 / 15">Janeiro</SelectCell>
          <SelectLabel $col="15 / 17">Selecione o dia &gt;</SelectLabel>
          <SelectCell $col="17 / 19" $on>
            1
            <DropButton>
              <svg width="8" height="6" viewBox="0 0 8 6"><path d="M0 0h8L4 6z" fill="#555" /></svg>
            </DropButton>
          </SelectCell>
          <FreezeLine />

          <CardTitle $col="3 / 9" $row="10" $pl={4}>Receitas Ano</CardTitle>
          <CardTitle $col="10 / 16" $row="10" $pl={3}>Receitas Mês</CardTitle>
          <CardTitle $col="17 / 23" $row="10" $pl={4}>Receitas Dia</CardTitle>
          <ValueCard $col="3 / 9" $row="12 / 16" $bg="#00a05a">R$ 238.928,00</ValueCard>
          <ArrowCell $col={9} $row="12 / 16" $dx={2}><ArrowUp /></ArrowCell>
          <ValueCard $col="10 / 16" $row="12 / 16" $bg="#00a05a">R$ 1.500,00</ValueCard>
          <ArrowCell $col={16} $row="12 / 16" $dx={-1}><ArrowUp /></ArrowCell>
          <ValueCard $col="17 / 23" $row="12 / 16" $bg="#00a05a">R$ 1.500,00</ValueCard>

          <CardTitle $col="3 / 9" $row="17" $pl={4} $pt={3}>Despesas Ano</CardTitle>
          <CardTitle $col="10 / 16" $row="17" $pl={3} $pt={3}>Despesas Mês</CardTitle>
          <CardTitle $col="17 / 23" $row="17" $pl={4} $pt={3}>Despesas Dia</CardTitle>
          <ValueCard $col="3 / 9" $row="19 / 23" $bg="#c00000">R$ 324.679,00</ValueCard>
          <ArrowCell $col={9} $row="19 / 23" $dx={-2} $dy={-1}><ArrowDown /></ArrowCell>
          <ValueCard $col="10 / 16" $row="19 / 23" $bg="#c00000">R$ 22.650,00</ValueCard>
          <ArrowCell $col={16} $row="19 / 23" $dx={-3} $dy={3}><ArrowDown /></ArrowCell>
          <ValueCard $col="17 / 23" $row="19 / 23" $bg="#c00000">R$ 0,00</ValueCard>

          <ChartPanel $col="3 / 13" $ml={2} $mr={1}>Análise Financeira</ChartPanel>
          <ChartPanel $col="13 / 24" $ml={9} $mr={75}>Lucro ou Prejuízo</ChartPanel>
        </SheetGrid>
        <VScroll>
          <ScrollArrow />
          <VThumb />
          <ScrollArrow $down />
        </VScroll>
      </SheetArea>

      <SheetTabs>
        <TabNav $w={28} $ml={21}><ChevronLeft size={18} strokeWidth={1.2} /></TabNav>
        <TabNav $w={28} $ml={13}><ChevronRight size={18} strokeWidth={1.2} /></TabNav>
        <TabNav $w={26} $ml={12}><Dots /></TabNav>
        <ActiveSheet>DASH1</ActiveSheet>
        {sheetTabs.map(([name, w], i) => (
          <SheetTab key={name} $w={w} $ml={i === 0 ? 6 : 0}>{name}</SheetTab>
        ))}
        <TabNav $w={46}><Dots /></TabNav>
        <TabNav $w={30}><Plus size={18} strokeWidth={1.2} /></TabNav>
        <TabNav $w={48}><Dots column /></TabNav>
        <HScroll>
          <SideArrow />
          <HThumb />
          <SideArrow $right />
        </HScroll>
      </SheetTabs>

      <StatusBar>
        Pronto
        <StatusGap $w={26} />
        <StatusSheetIcon />
        <StatusGap $w={22} />
        <AccessIcon />
        <StatusStrong>Acessibilidade: investigar</StatusStrong>
        <ViewButton $w={50} $on $first><StatusGridIcon /></ViewButton>
        <ViewButton $w={50}><StatusPageIcon /></ViewButton>
        <ViewButton $w={50}><StatusBreakIcon /></ViewButton>
        <Minus size={10} strokeWidth={1.3} style={{ marginLeft: 8 }} />
        <ZoomTrack />
        <Plus size={12} strokeWidth={1.3} />
        <ZoomValue>100%</ZoomValue>
      </StatusBar>
    </Window>
  )
}
